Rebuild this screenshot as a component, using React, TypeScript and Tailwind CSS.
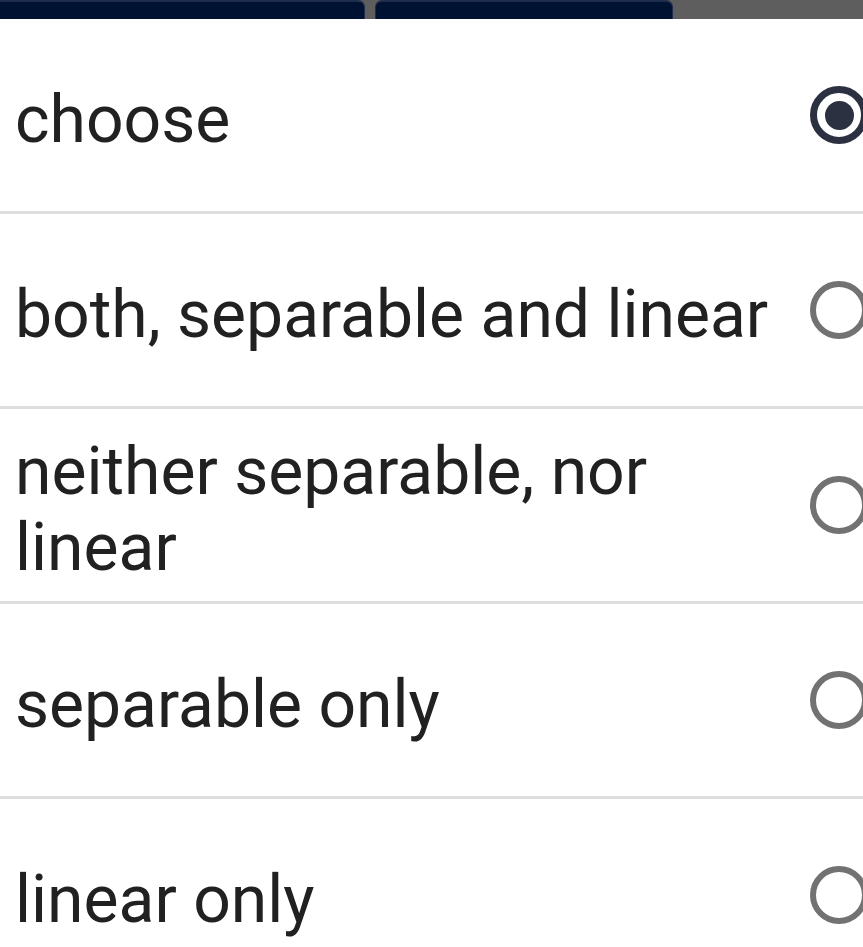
import React from "react";

const options = [
  { label: "choose", selected: true },
  { label: "both, separable and linear", selected: false },
  { label: "neither separable, nor linear", selected: false },
  { label: "separable only", selected: false },
  { label: "linear only", selected: false },
];

function Radio({ selected }: { selected: boolean }) {
  if (selected) {
    return (
      <div className="w-[58px] h-[58px] shrink-0 rounded-full border-[7px] border-[#2b3140] flex items-center justify-center mr-[-5px]">
        <div className="w-[29px] h-[29px] rounded-full bg-[#2b3140]" />
      </div>
    );
  }
  return (
    <div className="w-[58px] h-[58px] shrink-0 rounded-full border-[6px] border-[#727272] mr-[-5px]" />
  );
}

export default function App() {
  return (
    <div
      className="w-[863px] h-[947px] overflow-hidden bg-white"
      style={{ fontFamily: "Roboto, 'Liberation Sans', sans-serif" }}
    >
      <div className="h-[19px] bg-[#5e5e5e] flex">
        <div className="w-[365px] h-full bg-[#001231] rounded-tr-[7px] border-t-2 border-r border-[#1f2d4c]" />
        <div className="w-[10px]" />
        <div className="w-[298px] h-full bg-[#001231] rounded-t-[7px] border-t-2 border-x border-[#1f2d4c]" />
      </div>
      {options.map((o) => (
        <div
          key={o.label}
          className="h-[195px] border-b-[3px] border-[#dedede] flex items-center pl-[15px]"
        >
          <div className="flex-1 text-[66px] leading-[76px] text-[#212121] pr-[30px] pt-[9px]">
            {o.label}
          </div>
          <Radio selected={o.selected} />
        </div>
      ))}
    </div>
  );
}
